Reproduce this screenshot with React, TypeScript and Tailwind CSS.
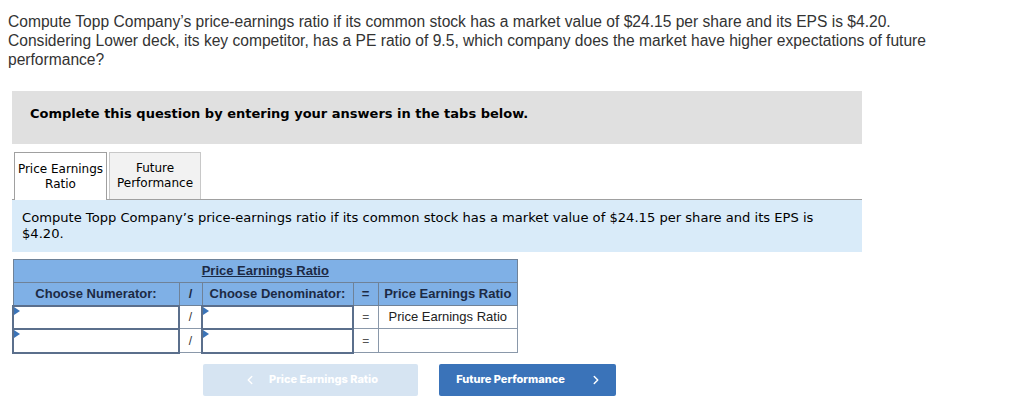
import { ChevronLeft, ChevronRight } from 'lucide-react';

const verdana = { fontFamily: '"DejaVu Sans", Verdana, sans-serif' };

function InputCell({ className = '' }: { className?: string }) {
  return (
    <td className={`relative h-[23px] border-2 border-[#5b6f8c] bg-white p-0 ${className}`}>
      <span className="absolute left-0 top-0 h-0 w-0 border-y-[4px] border-l-[6px] border-y-transparent border-l-[#3b74b8]" />
    </td>
  );
}

export default function App() {
  return (
    <div className="min-h-[419px] w-[1022px] bg-white">
      <p
        className="px-2 pt-[12px] text-[15.6px] leading-[19px] text-[#333]"
        style={{ fontFamily: '"Liberation Sans", Arial, sans-serif' }}
      >
        Compute Topp Company’s price-earnings ratio if its common stock has a market value of $24.15 per share and its EPS is $4.20.
        <br />
        Considering Lower deck, its key competitor, has a PE ratio of 9.5, which company does the market have higher expectations of future
        <br />
        performance?
      </p>

      <div className="ml-3 mt-[22px] h-[53px] w-[850px] bg-[#e0e0e0] pl-[18px] pt-[14px] leading-[16px]" style={verdana}>
        <span className="text-[13px] font-bold text-black">Complete this question by entering your answers in the tabs below.</span>
      </div>

      <div className="ml-3 mt-2 w-[850px]" style={verdana}>
        <div className="flex gap-[2px] border-b border-[#a0a0a0] pl-[2px]">
          <div className="-mb-px flex h-[48px] w-[93px] flex-col items-center justify-center border border-b-0 border-[#a0a0a0] bg-white text-center text-[12px] leading-[15px] text-black">
            <span>Price Earnings</span>
            <span>Ratio</span>
          </div>
          <div className="flex h-[47px] w-[92px] flex-col items-center justify-center border border-b-0 border-[#c8c8c8] bg-[#f2f2f2] text-center text-[12px] leading-[15px] text-black">
            <span>Future</span>
            <span>Performance</span>
          </div>
        </div>
        <div className="h-[52px] bg-[#d9ebf9] px-[10px] pt-[10px] text-[13.1px] leading-[16px] text-black">
          Compute Topp Company’s price-earnings ratio if its common stock has a market value of $24.15 per share and its EPS is $4.20.
        </div>
      </div>

      <table
        className="ml-3 mt-[7px] w-[506px] border-collapse text-[13px] text-[#1c2a44]"
        style={{ fontFamily: '"Liberation Sans", Arial, sans-serif' }}
      >
        <tbody>
          <tr className="bg-[#7fb0e6]">
            <td colSpan={5} className="h-[23px] border border-[#6f8298] text-center font-bold underline">
              Price Earnings Ratio
            </td>
          </tr>
          <tr className="bg-[#7fb0e6] font-bold">
            <td className="h-[23px] w-[166px] border border-[#6f8298] text-center">Choose Numerator:</td>
            <td className="w-[23px] border border-[#6f8298] text-center">/</td>
            <td className="w-[151px] border border-[#6f8298] text-center">Choose Denominator:</td>
            <td className="w-[25px] border border-[#6f8298] text-center">=</td>
            <td className="border border-[#6f8298] text-center">Price Earnings Ratio</td>
          </tr>
          <tr>
            <InputCell />
            <td className="border border-[#8a98aa] text-center text-[12px] text-[#333]">/</td>
            <InputCell />
            <td className="border border-[#8a98aa] text-center text-[12px] text-[#555]">=</td>
            <td className="border border-[#8a98aa] text-center font-normal text-[#222]">Price Earnings Ratio</td>
          </tr>
          <tr>
            <InputCell />
            <td className="border border-[#8a98aa] text-center text-[12px] text-[#333]">/</td>
            <InputCell />
            <td className="border border-[#8a98aa] text-center text-[12px] text-[#555]">=</td>
            <td className="h-[24px] border border-[#8a98aa]" />
          </tr>
        </tbody>
      </table>

      <div className="ml-[203px] mt-[10px] flex gap-[21px]" style={{ fontFamily: 'Inter, sans-serif' }}>
        <button className="flex h-[32px] w-[215px] items-center justify-center gap-3 rounded-[2px] bg-[#d6e4f2] text-[11px] font-extrabold text-white">
          <ChevronLeft size={14} strokeWidth={2.5} />
          <span>Price Earnings Ratio</span>
        </button>
        <button className="flex h-[32px] w-[177px] items-center justify-center gap-6 rounded-[2px] bg-[#3a73b9] pl-1 text-[11px] font-extrabold text-white">
          <span>Future Performance</span>
          <ChevronRight size={14} strokeWidth={2.5} />
        </button>
      </div>
    </div>
  );
}
